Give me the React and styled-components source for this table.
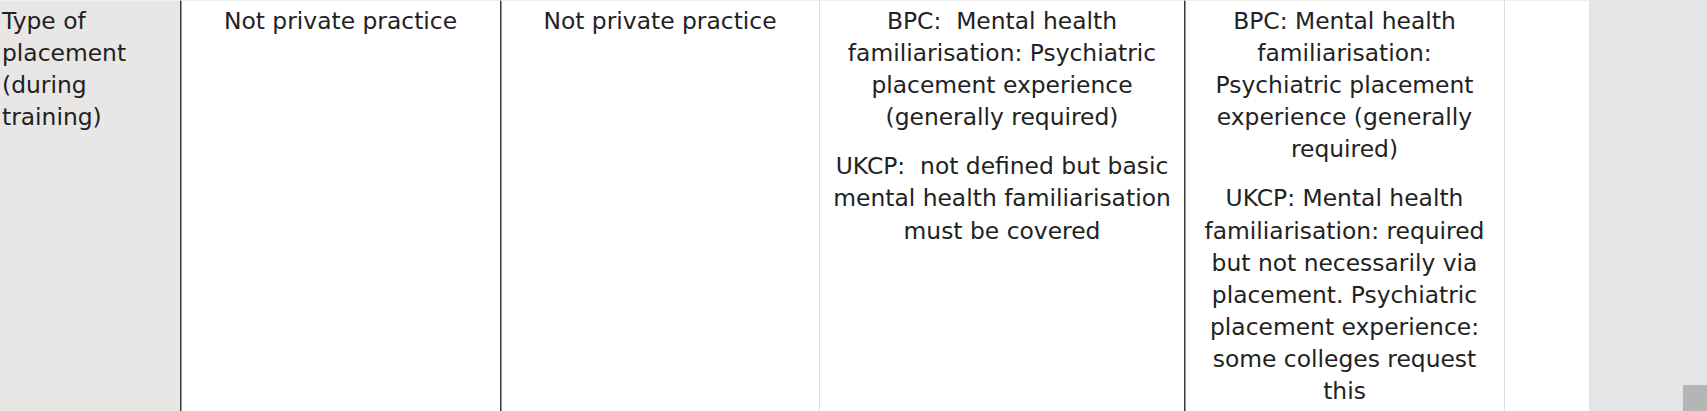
import React from "react";
import styled, { createGlobalStyle, css } from "styled-components";

const GlobalStyle = createGlobalStyle`
  html, body {
    margin: 0;
    padding: 0;
    background: #ffffff;
    overflow: hidden;
  }
  body {
    font-family: "DejaVu Sans", Verdana, sans-serif;
    color: #222222;
  }
`;

const Page = styled.div`
  display: flex;
  height: 411px;
  width: 1707px;
`;

const Table = styled.div`
  display: grid;
  grid-template-columns: 180px 320px 319px 365px 320px 85px;
  height: 100%;
`;

const dividers = {
  dark: css`
    border-left: 1px solid #3a3a3a;
    box-shadow: inset 1px 0 0 #9a9a9a;
  `,
  light: css`
    border-left: 1px solid #dcdcdc;
  `,
  none: css``,
};

const Cell = styled.div`
  box-sizing: border-box;
  border-top: 1px solid ${(p) => (p.$label ? "#f1f1f0" : "#eeeeee")};
  background: ${(p) => (p.$label ? "#e8e7e5" : "#ffffff")};
  text-align: ${(p) => (p.$label ? "left" : "center")};
  padding: ${(p) => (p.$label ? "4px 6px 0 2px" : "4px 10px 0 10px")};
  font-size: 23.4px;
  line-height: 32.1px;
  ${(p) => dividers[p.$divider || "none"]}
`;

const Para = styled.p`
  margin: 0 0 17px 0;
`;

const ScrollGutter = styled.div`
  flex: 1;
  background: #e5e5e5;
  display: flex;
  flex-direction: column;
  justify-content: flex-end;
  align-items: flex-end;
`;

const Thumb = styled.div`
  width: 24px;
  height: 26px;
  background: #b5b5b5;
`;

export default function App() {
  return (
    <>
      <GlobalStyle />
      <Page>
        <Table>
          <Cell $label>Type of placement (during training)</Cell>
          <Cell $divider="dark">
            <Para>Not private practice</Para>
          </Cell>
          <Cell $divider="dark">
            <Para>Not private practice</Para>
          </Cell>
          <Cell $divider="light">
            <Para>BPC:{"\u00a0"} Mental health familiarisation: Psychiatric placement experience (generally required)</Para>
            <Para>UKCP:{"\u00a0"} not defined but basic mental health familiarisation must be covered</Para>
          </Cell>
          <Cell $divider="dark">
            <Para>BPC: Mental health familiarisation: Psychiatric placement experience (generally required)</Para>
            <Para>UKCP: Mental health familiarisation: required but not necessarily via placement. Psychiatric placement experience: some colleges request this</Para>
          </Cell>
          <Cell $divider="light" />
        </Table>
        <ScrollGutter>
          <Thumb />
        </ScrollGutter>
      </Page>
    </>
  );
}
